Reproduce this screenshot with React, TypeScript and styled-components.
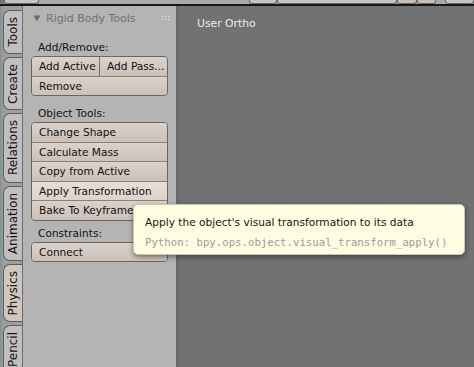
import React from "react";
import styled, { createGlobalStyle, css } from "styled-components";

const Global = createGlobalStyle`
  html, body { margin: 0; padding: 0; background: #727272; overflow: hidden; }
  * { box-sizing: border-box; }
`;

const FONT = `"DejaVu Sans", "Liberation Sans", sans-serif`;
const MONO = `"DejaVu Sans Mono", "Liberation Mono", monospace`;

const Screen = styled.div`
  position: relative;
  width: 474px;
  height: 367px;
  display: flex;
  flex-direction: column;
  overflow: hidden;
  font-family: ${FONT};
  background: #727272;
`;

const HeaderStrip = styled.div`
  height: 6px;
  flex: none;
  display: flex;
  align-items: flex-start;
  background: #a9a9a9;
  border-bottom: 2px solid #161616;
`;

const HeaderGap = styled.div<{ $w: number }>`
  width: ${(p) => p.$w}px;
  flex: none;
`;

const HeaderButton = styled.div<{ $w: number; $tone: "light" | "beige" | "dark" }>`
  width: ${(p) => p.$w}px;
  height: 4px;
  flex: none;
  border: 1px solid #6a6a6a;
  border-top: none;
  border-radius: 0 0 3px 3px;
  background: ${(p) =>
    p.$tone === "beige" ? "#c9bdb3" : p.$tone === "dark" ? "#7d7d7d" : "#c4c4c4"};
`;

const Main = styled.div`
  flex: 1;
  display: flex;
  min-height: 0;
`;

const TabBar = styled.div`
  width: 22px;
  flex: none;
  display: flex;
  flex-direction: column;
  gap: 3px;
  padding: 4px 0 0 3px;
  background: linear-gradient(90deg, #7f9294 0px, #9d9d9d 3px);
  overflow: hidden;
`;

const Tab = styled.div<{ $active?: boolean }>`
  flex: none;
  width: 19px;
  padding: 6px 0;
  display: flex;
  align-items: center;
  justify-content: center;
  border: 1px solid #5e5e5e;
  border-right: none;
  border-radius: 7px 0 0 7px;
  background: ${(p) => (p.$active ? "#d2c7be" : "#c0c0c0")};
  color: #141414;
  font-size: 12px;
  line-height: 1;
`;

const TabLabel = styled.span`
  writing-mode: vertical-rl;
  transform: rotate(180deg);
  white-space: nowrap;
`;

const ToolPanel = styled.div`
  width: 155px;
  flex: none;
  background: #b4b4b4;
  border-left: 1px solid #6c6c6c;
  border-right: 1px solid #656565;
  display: flex;
  flex-direction: column;
`;

const PanelHeader = styled.div`
  height: 23px;
  display: flex;
  align-items: center;
  padding: 2px 6px 0 10px;
  color: #717171;
  font-size: 11px;
`;

const HeaderTitle = styled.span`
  flex: 1;
  margin-left: 5px;
`;

const Section = styled.div<{ $top: number }>`
  margin-top: ${(p) => p.$top}px;
  display: flex;
  flex-direction: column;
`;

const Label = styled.div`
  height: 16px;
  line-height: 16px;
  padding-left: 15px;
  font-size: 10.6px;
  color: #121212;
  margin-bottom: 1px;
`;

const Group = styled.div`
  margin: 0 8px 0 8px;
  border: 1px solid #6b6460;
  border-radius: 4px;
  overflow: hidden;
  display: flex;
  flex-direction: column;
`;

const Row = styled.div`
  display: flex;
  & + & {
    border-top: 1px solid #8a817b;
  }
`;

const Button = styled.div<{ $hover?: boolean }>`
  flex: 1;
  height: 18.5px;
  line-height: 18.5px;
  padding-left: 7px;
  font-size: 10.6px;
  color: #111;
  white-space: nowrap;
  overflow: hidden;
  ${(p) =>
    p.$hover
      ? css`
          background: linear-gradient(#e6dfd9, #dcd3cc);
        `
      : css`
          background: linear-gradient(#dbd2cb, #cbc1b9);
        `}
  & + & {
    border-left: 1px solid #7a726d;
  }
`;

const Viewport = styled.div`
  flex: 1;
  background: linear-gradient(90deg, #6a6a6a 0px, #727272 5px);
  padding: 11px 0 0 20px;
  color: #ececec;
  font-size: 10.8px;
`;

const Tooltip = styled.div`
  position: absolute;
  left: 133px;
  top: 204px;
  width: 332px;
  height: 51px;
  background: #fefde2;
  border: 1px solid #c9c7b0;
  border-radius: 5px;
  box-shadow: 0 2px 5px rgba(0, 0, 0, 0.45);
  padding: 11px 0 0 11px;
  display: flex;
  flex-direction: column;
  gap: 7px;
`;

const TipText = styled.div`
  font-family: ${FONT};
  font-size: 10.6px;
  line-height: 13px;
  color: #161616;
  white-space: nowrap;
`;

const TipCode = styled.div`
  font-family: ${MONO};
  font-size: 10.7px;
  line-height: 13px;
  color: #9c9c9c;
  white-space: nowrap;
`;

const Triangle = () => (
  <svg width="8" height="7" viewBox="0 0 8 7">
    <path d="M0.5 0.5 L7.5 0.5 L4 6.5 Z" fill="#6e6e6e" />
  </svg>
);

const DragDots = () => (
  <svg width="8" height="5" viewBox="0 0 8 5">
    {[0, 3, 6].map((x) =>
      [0, 3].map((y) => <rect key={`${x}-${y}`} x={x} y={y} width="1.3" height="1.3" fill="#dcdcdc" />)
    )}
  </svg>
);

const tabs = ["Tools", "Create", "Relations", "Animation", "Physics", "Grease Pencil"];

export default function App() {
  return (
    <>
      <Global />
      <Screen>
        <HeaderStrip>
          <HeaderButton $w={4} $tone="dark" />
          <HeaderButton $w={35} $tone="light" />
          <HeaderGap $w={210} />
          <HeaderButton $w={28} $tone="light" />
          <HeaderButton $w={120} $tone="light" />
          <HeaderButton $w={20} $tone="beige" />
          <HeaderButton $w={19} $tone="beige" />
          <HeaderGap $w={9} />
          <HeaderButton $w={29} $tone="light" />
        </HeaderStrip>
        <Main>
          <TabBar>
            {tabs.map((t) => (
              <Tab key={t} $active={t === "Physics"}>
                <TabLabel>{t}</TabLabel>
              </Tab>
            ))}
          </TabBar>
          <ToolPanel>
            <PanelHeader>
              <Triangle />
              <HeaderTitle>Rigid Body Tools</HeaderTitle>
              <DragDots />
            </PanelHeader>
            <Section $top={10}>
              <Label>Add/Remove:</Label>
              <Group>
                <Row>
                  <Button>Add Active</Button>
                  <Button>Add Pass...</Button>
                </Row>
                <Row>
                  <Button>Remove</Button>
                </Row>
              </Group>
            </Section>
            <Section $top={9}>
              <Label>Object Tools:</Label>
              <Group>
                <Row><Button>Change Shape</Button></Row>
                <Row><Button>Calculate Mass</Button></Row>
                <Row><Button>Copy from Active</Button></Row>
                <Row><Button $hover>Apply Transformation</Button></Row>
                <Row><Button>Bake To Keyframes</Button></Row>
              </Group>
            </Section>
            <Section $top={4}>
              <Label>Constraints:</Label>
              <Group>
                <Row><Button>Connect</Button></Row>
              </Group>
            </Section>
          </ToolPanel>
          <Viewport>User Ortho</Viewport>
        </Main>
        <Tooltip>
          <TipText>Apply the object's visual transformation to its data</TipText>
          <TipCode>Python: bpy.ops.object.visual_transform_apply()</TipCode>
        </Tooltip>
      </Screen>
    </>
  );
}
